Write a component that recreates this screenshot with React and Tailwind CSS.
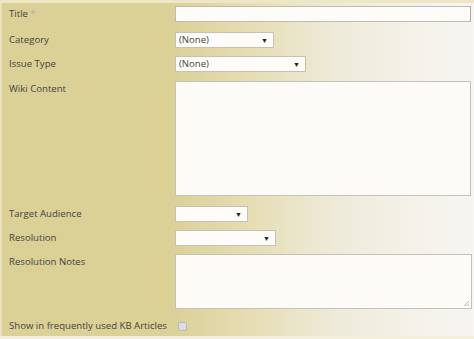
import React from 'react';

const font = { fontFamily: '"Open Sans", "Noto Sans", sans-serif' };

function Label({ children, className = '' }) {
  return (
    <div className={`w-[166px] shrink-0 text-[9.6px] leading-[16px] text-[#444] ${className}`}>
      {children}
    </div>
  );
}

function Select({ width, value }) {
  return (
    <div
      className={`flex h-[16px] items-center justify-between border border-[#c4c2b8] bg-[#fdfcf9] pl-[3px] pr-[5px] text-[9.6px] text-[#444] ${width}`}
    >
      <span>{value}</span>
      <span className="text-[7px] leading-none text-[#222]">▼</span>
    </div>
  );
}

function Grip() {
  return (
    <svg className="absolute bottom-[1px] right-[1px]" width="7" height="7" viewBox="0 0 7 7">
      <path d="M6 1 L1 6 M6 3.5 L3.5 6 M6 5.5 L5.5 6" stroke="#a8a8a8" strokeWidth="0.8" fill="none" />
    </svg>
  );
}

export default function App() {
  return (
    <div
      style={font}
      className="flex h-[339px] w-[474px] flex-col overflow-hidden bg-[linear-gradient(to_right,#dbd095_0px,#dbd095_170px,#e6ddb4_250px,#efebdb_340px,#f4f2ea_420px,#f6f5f0_474px)]"
    >
      <div className="h-[3px] shrink-0 bg-[#eee7c6]" />
      <div className="flex flex-1 border-l-2 border-l-[#e9e2bd]">
        <div className="flex flex-1 flex-col pl-[7px]">
          <div className="mt-[3px] flex items-start">
            <Label>
              Title <span className="text-[#c9a3a3]">*</span>
            </Label>
            <div className="h-[16px] w-[296px] border border-[#bdbbb2] border-r-[#a9a9a9] bg-[#fdfcf9]" />
          </div>

          <div className="mt-[10px] flex items-start">
            <Label>Category</Label>
            <Select width="w-[99px]" value="(None)" />
          </div>

          <div className="mt-[8px] flex items-start">
            <Label>Issue Type</Label>
            <Select width="w-[131px]" value="(None)" />
          </div>

          <div className="mt-[9px] flex items-start">
            <Label>Wiki Content</Label>
            <div className="h-[115px] w-[296px] border border-[#c4c2b8] bg-[#fcfbf7]" />
          </div>

          <div className="mt-[10px] flex items-start">
            <Label>Target Audience</Label>
            <Select width="w-[73px]" value="" />
          </div>

          <div className="mt-[8px] flex items-start">
            <Label>Resolution</Label>
            <Select width="w-[101px]" value="" />
          </div>

          <div className="mt-[8px] flex items-start">
            <Label>Resolution Notes</Label>
            <div className="relative h-[55px] w-[297px] border border-[#c4c2b8] bg-[#fcfbf7]">
              <Grip />
            </div>
          </div>

          <div className="mt-[9px] flex items-center">
            <Label>Show in frequently used KB Articles</Label>
            <div className="ml-[3px] h-[9px] w-[9px] rounded-[2px] border border-[#b9b9c3] bg-[#dcdce4]" />
          </div>
        </div>
      </div>
      <div className="h-[3px] shrink-0 bg-[#f3efdc]" />
    </div>
  );
}
